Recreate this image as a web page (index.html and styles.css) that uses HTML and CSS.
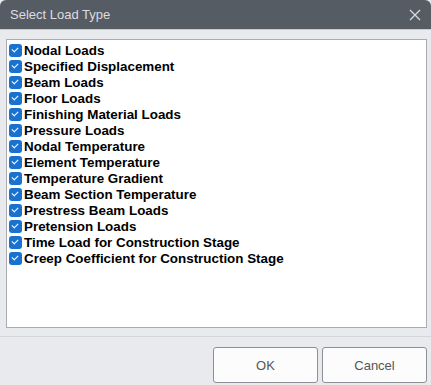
FILE: index.html
```html
<!DOCTYPE html>
<html>
<head>
  <meta charset="utf-8">
  <title>Select Load Type</title>
  <link rel="stylesheet" href="styles.css">
</head>
<body class="body">
  <div class="dialog">
    <div class="titlebar">
      <span class="title">Select Load Type</span>
      <svg class="close" width="12" height="12" viewBox="0 0 12 12">
        <path d="M1 1 L11 11 M11 1 L1 11" stroke="#d8dadd" stroke-width="1.3" fill="none"/>
      </svg>
    </div>
    <div class="content">
      <div class="listbox">
        <label class="item"><span class="check"></span>Nodal Loads</label>
        <label class="item"><span class="check"></span>Specified Displacement</label>
        <label class="item"><span class="check"></span>Beam Loads</label>
        <label class="item"><span class="check"></span>Floor Loads</label>
        <label class="item"><span class="check"></span>Finishing Material Loads</label>
        <label class="item"><span class="check"></span>Pressure Loads</label>
        <label class="item"><span class="check"></span>Nodal Temperature</label>
        <label class="item"><span class="check"></span>Element Temperature</label>
        <label class="item"><span class="check"></span>Temperature Gradient</label>
        <label class="item"><span class="check"></span>Beam Section Temperature</label>
        <label class="item"><span class="check"></span>Prestress Beam Loads</label>
        <label class="item"><span class="check"></span>Pretension Loads</label>
        <label class="item"><span class="check"></span>Time Load for Construction Stage</label>
        <label class="item"><span class="check"></span>Creep Coefficient for Construction Stage</label>
      </div>
    </div>
    <div class="footer">
      <button class="btn">OK</button>
      <button class="btn">Cancel</button>
    </div>
  </div>
</body>
</html>
```
FILE: styles.css
```css
.body {
  margin: 0;
  background-color: #e9eaee;
  font-family: "Liberation Sans", Arial, sans-serif;
}

.dialog {
  width: 431px;
  height: 385px;
  display: flex;
  flex-direction: column;
}

.titlebar {
  height: 29px;
  background-color: #565c64;
  border-radius: 6px 6px 0 0;
  border-bottom: 1px solid #c9cbd0;
  display: flex;
  align-items: center;
  justify-content: space-between;
  padding: 0 10px;
}

.title {
  color: #dcdde0;
  font-size: 13px;
}

.content {
  padding: 9px 4px 0 6px;
}

.listbox {
  height: 285px;
  background-color: white;
  border: 1px solid #a9abb0;
  padding: 2px 0 0 2px;
}

.item {
  display: flex;
  align-items: center;
  height: 16px;
  font-size: 13.4px;
  font-weight: bold;
  color: #000;
}

.check {
  width: 13px;
  height: 13px;
  margin-right: 2px;
  border-radius: 3px;
  background-color: #1a72d0;
  position: relative;
}

.check::after {
  content: "";
  position: absolute;
  left: 3px;
  top: 3px;
  width: 5px;
  height: 3px;
  border-left: 1.2px solid white;
  border-bottom: 1.2px solid white;
  transform: rotate(-45deg);
}

.footer {
  margin-top: 8px;
  border-top: 1px solid #d4d6da;
  display: flex;
  justify-content: flex-end;
  gap: 4px;
  padding: 10px 4px 0 0;
}

.btn {
  width: 105px;
  height: 36px;
  background-color: #fcfcfd;
  border: 1px solid #8d9096;
  border-radius: 3px;
  font-family: "Liberation Sans", Arial, sans-serif;
  font-size: 13px;
  color: #555;
}
```
